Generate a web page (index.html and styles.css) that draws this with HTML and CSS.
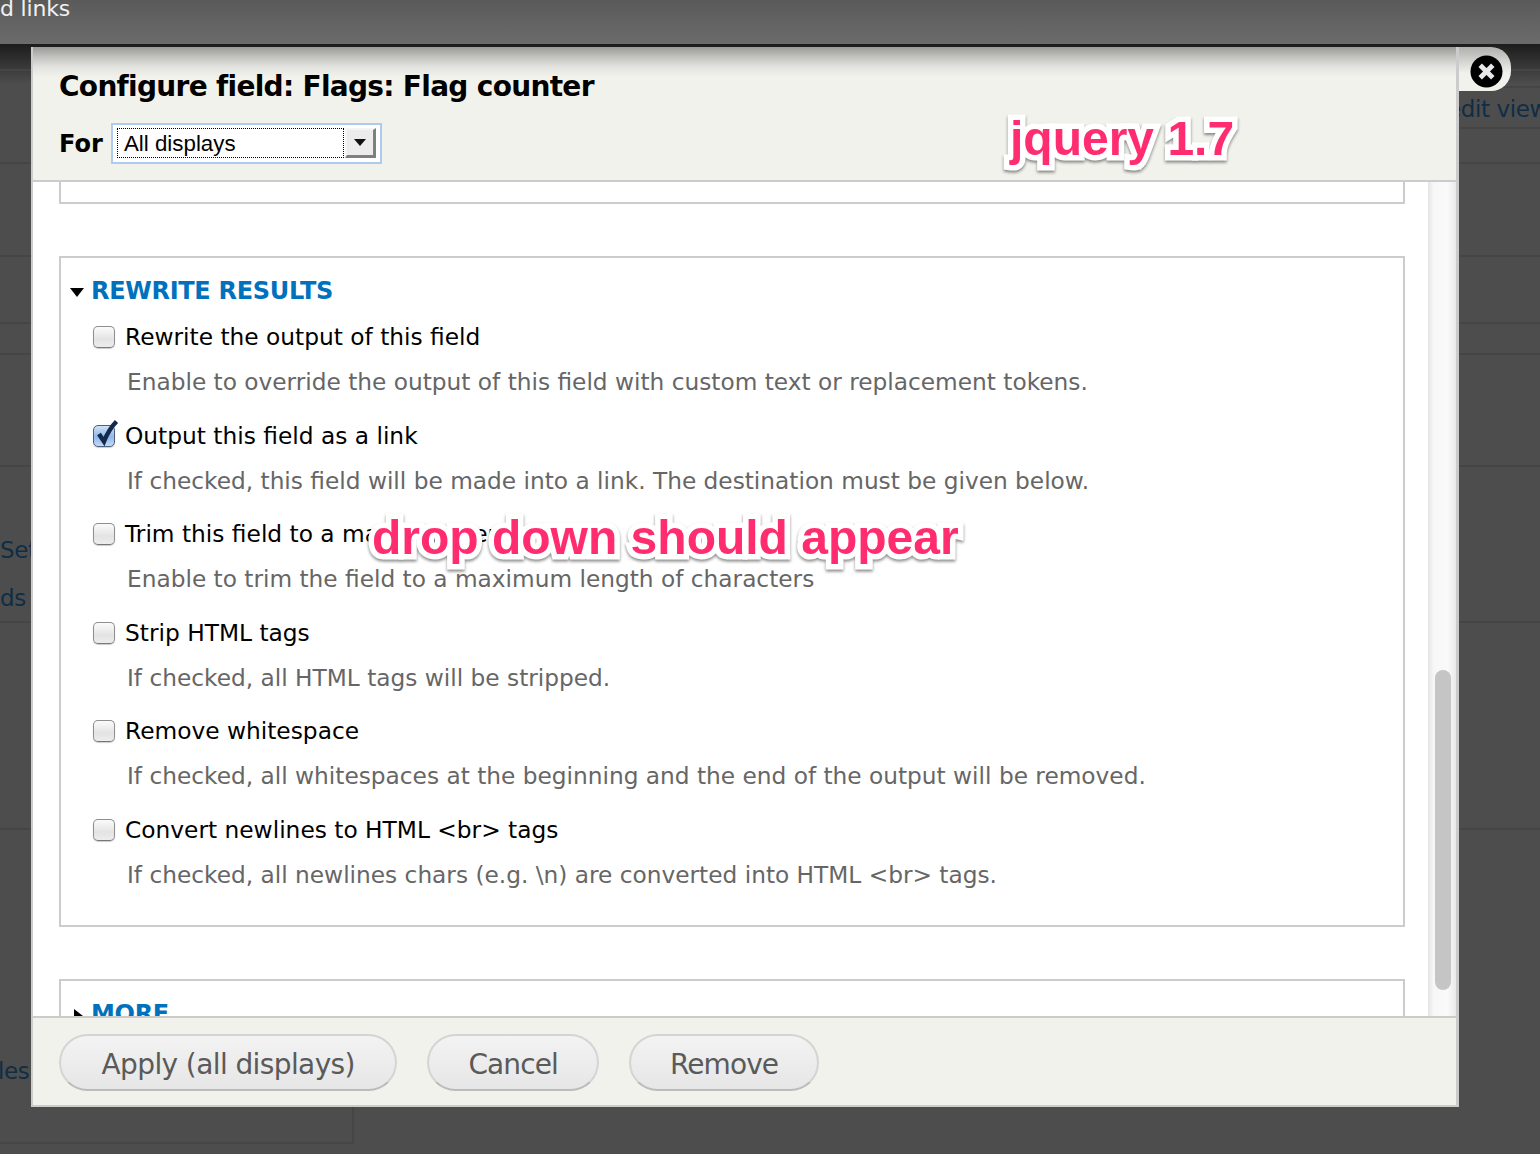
FILE: index.html
```html
<!DOCTYPE html>
<html lang="en">
<head>
<meta charset="utf-8">
<title>Configure field</title>
<link rel="stylesheet" href="styles.css">
</head>
<body>
<div class="topbar"><span class="topbar-text">d links</span></div>
<div class="page-bg">
  <span class="bg-line l1"></span><span class="bg-line l2"></span><span class="bg-line l3"></span><span class="bg-line l4"></span><span class="bg-line l5"></span><span class="bg-line l6"></span><span class="bg-line l7"></span><span class="bg-line l8"></span><span class="bg-line r1"></span><span class="bg-line r2"></span>
  <span class="bg-text t1">Set</span><span class="bg-text t2">ds</span><span class="bg-text t3">les</span><span class="bg-text t4">edit view</span>
  <span class="bg-box"></span>
</div>

<div class="close-tab">
  <svg class="close-icon" width="33" height="33" viewBox="0 0 34 34"><circle cx="17" cy="17" r="16.500" fill="#000"/><path d="M10.500 10.500 23.500 23.500M23.500 10.500 10.500 23.500" stroke="#e8e8e8" stroke-width="5"/></svg>
</div>

<div class="modal">
  <header class="modal-head">
    <h1 class="modal-title">Configure field: Flags: Flag counter</h1>
    <div class="for-row">
      <label class="for-label">For</label>
      <div class="select">
        <span class="select-value">All displays</span>
        <span class="select-btn"><span class="select-arrow"></span></span>
      </div>
    </div>
  </header>

  <div class="modal-body">
    <div class="scroll-content">
      <div class="stub"></div>
      <section class="fieldset">
        <h2 class="legend"><span class="tri-down"></span>REWRITE RESULTS</h2>
        <div class="item">
          <div class="item-row"><span class="cb"></span><span class="item-label">Rewrite the output of this field</span></div>
          <p class="item-desc">Enable to override the output of this field with custom text or replacement tokens.</p>
        </div>
        <div class="item">
          <div class="item-row"><span class="cb cb-on"><svg class="tick" width="26" height="28" viewBox="0 0 26 28"><path d="M5 15 10 22.500C13 15 17 8 22.500 2.500" fill="none" stroke="#14294d" stroke-width="4.500"/></svg></span><span class="item-label">Output this field as a link</span></div>
          <p class="item-desc">If checked, this field will be made into a link. The destination must be given below.</p>
        </div>
        <div class="item">
          <div class="item-row"><span class="cb"></span><span class="item-label">Trim this field to a maximum length</span></div>
          <p class="item-desc">Enable to trim the field to a maximum length of characters</p>
        </div>
        <div class="item">
          <div class="item-row"><span class="cb"></span><span class="item-label">Strip HTML tags</span></div>
          <p class="item-desc">If checked, all HTML tags will be stripped.</p>
        </div>
        <div class="item">
          <div class="item-row"><span class="cb"></span><span class="item-label">Remove whitespace</span></div>
          <p class="item-desc">If checked, all whitespaces at the beginning and the end of the output will be removed.</p>
        </div>
        <div class="item">
          <div class="item-row"><span class="cb"></span><span class="item-label">Convert newlines to HTML &lt;br&gt; tags</span></div>
          <p class="item-desc">If checked, all newlines chars (e.g. \n) are converted into HTML &lt;br&gt; tags.</p>
        </div>
      </section>
      <section class="fieldset fieldset-more">
        <h2 class="legend"><span class="tri-right"></span>MORE</h2>
      </section>
    </div>
    <div class="scrollbar"><div class="thumb"></div></div>
  </div>

  <footer class="modal-foot">
    <button class="btn btn-wide">Apply (all displays)</button>
    <button class="btn">Cancel</button>
    <button class="btn">Remove</button>
  </footer>
</div>

<span class="note note-jquery">jquery 1.7</span>
<span class="note note-drop">drop down should appear</span>
</body>
</html>
```

FILE: styles.css
```css
* { box-sizing: border-box; }
html, body { margin: 0; padding: 0; }
body {
  position: relative;
  width: 1540px;
  height: 1154px;
  overflow: hidden;
  background: #4d4d4d;
  font-family: "DejaVu Sans", "Liberation Sans", sans-serif;
}

/* page behind the overlay */
.topbar {
  height: 44px;
  background: linear-gradient(#5a5a5a, #6b6b6b);
  overflow: hidden;
}
.topbar-text {
  display: block;
  margin-top: -6px;
  font-size: 22px;
  line-height: 30px;
  color: #f0f0f0;
  letter-spacing: -0.2px;
}
.page-bg { position: absolute; inset: 44px 0 0 0; background: linear-gradient(#1c1c1c, #3a3a3a 24px, #4d4d4d 40px); }
.bg-line { position: absolute; left: 0; right: 0; height: 2px; background: #454545; }
.l1 { top: 25px; } .l2 { top: 118px; } .l3 { top: 211px; } .l4 { top: 278px; }
.l5 { top: 309px; } .l6 { top: 421px; } .l7 { top: 577px; } .l8 { top: 784px; }
.r1 { left: 1459px; top: 42px; }
.r2 { left: 1459px; top: 83px; }
.bg-text { position: absolute; font-size: 23px; letter-spacing: -0.4px; line-height: 30px; color: #0f2d45; white-space: nowrap; }
.t1 { left: 0; top: 491px; }
.t2 { left: 0; top: 539px; }
.t3 { left: -2px; top: 1012px; }
.t4 { left: 1447px; top: 50px; }
.bg-box { position: absolute; left: 0; top: 990px; width: 354px; height: 110px; border: solid #464646; border-width: 0 2px 2px 0; }

/* close tab */
.close-tab {
  position: absolute;
  left: 1456px;
  top: 47px;
  width: 55px;
  height: 44px;
  background: linear-gradient(#b0b0ae, #f2f2ed 60%);
  border-radius: 0 20px 20px 0;
  display: flex;
  align-items: center;
  justify-content: flex-end;
  padding: 4px 8px 0 0;
}
.close-icon { display: block; }

/* dialog */
.modal {
  position: absolute;
  left: 31px;
  top: 47px;
  width: 1428px;
  height: 1060px;
  border: solid #ccc;
  border-width: 0 3px 2px 2px;
  display: flex;
  flex-direction: column;
  background: #fff;
}
.modal-head {
  height: 135px;
  flex: none;
  padding: 21px 0 0 26px;
  background: linear-gradient(#9a9a98, #c6c6c3 11px, #e2e2de 20px, #f2f2ed 30px);
  border-bottom: 2px solid #ccc;
}
.modal-title {
  margin: 0;
  font-size: 28px;
  line-height: 38px;
  letter-spacing: -0.7px;
  font-weight: bold;
  color: #000;
}
.for-row {
  display: flex;
  align-items: center;
  margin-top: 17px;
}
.for-label { font-size: 24px; font-weight: bold; line-height: 40px; width: 52px; color: #000; }
.select {
  position: relative;
  width: 271px;
  height: 41px;
  border: 2px solid #aecbef;
  background: #fff;
  display: flex;
  align-items: flex-start;
  padding: 3px 4px 0 4px;
}
.select-value {
  width: 229px;
  height: 30px;
  border: 1px dotted #000;
  padding-left: 6px;
  font: 22.300px/29px "Liberation Sans", sans-serif;
  color: #000;
}
.select-btn {
  width: 31px;
  height: 30px;
  margin-left: 1px;
  background: #ececec;
  border: solid;
  border-width: 2px 3px 3px 2px;
  border-color: #f5f5f5 #7f7f7f #7f7f7f #f5f5f5;
  display: flex;
  align-items: center;
  justify-content: center;
}
.select-arrow { border: solid transparent; border-width: 7px 6px 0; border-top-color: #111; }

.modal-body { flex: 1; min-height: 0; display: flex; overflow: hidden; }
.scroll-content { flex: 1; min-width: 0; padding: 0 23px 0 26px; overflow: hidden; }
.stub {
  height: 22px;
  border: 2px solid #ccc;
  border-top: 0;
}
.fieldset {
  border: 2px solid #ccc;
  margin: 52px 0 0;
  height: 671px;
  padding: 16px 9px 0;
}
.fieldset-more { margin-top: 52px; height: 120px; padding-top: 16px; }
.legend {
  display: flex;
  align-items: center;
  margin: 0;
  height: 34px;
  font-size: 24px;
  letter-spacing: -0.3px;
  font-weight: bold;
  color: #0071bd;
}
.tri-down { border: solid transparent; border-width: 9px 7px 0; border-top-color: #000; margin-right: 7px; margin-top: 3px; }
.tri-right { border: solid transparent; border-width: 7px 0 7px 9px; border-left-color: #000; margin: 3px 8px 0 4px; }

.item { height: 98.6px; padding-left: 23px; }
.item:first-of-type { margin-top: 14px; }
.item-row { display: flex; align-items: center; height: 30px; }
.cb {
  position: relative;
  width: 22px;
  height: 22px;
  flex: none;
  margin-right: 10px;
  border-radius: 5px;
  border: 1px solid #8e8e8e;
  border-bottom-color: #777;
  background: linear-gradient(#fbfbfb, #e3e3e3 60%, #ededed);
  box-shadow: 0 1px 1px rgba(0,0,0,.2);
}
.cb-on { background: linear-gradient(#cfe2f7, #8fb8e8 55%, #c3dbf5); border-color: #4d5f7d; }
.tick { position: absolute; left: 0; top: -7px; }
.item-label { font-size: 23.300px; line-height: 30px; color: #000; white-space: nowrap; }
.item-desc { margin: 15px 0 0 2px; padding-left: 32px; font-size: 23.250px; line-height: 30px; color: #666; white-space: nowrap; }

.scrollbar {
  flex: none;
  width: 28px;
  position: relative;
  background: linear-gradient(90deg, #e4e4e4, #f7f7f7 20%, #fafafa 70%, #e9e9e9);
  padding: 488px 5px 0 7px;
}
.thumb { width: 16px; height: 320px; border-radius: 8px; background: #c5c5c5; }

.modal-foot {
  height: 89px;
  flex: none;
  display: flex;
  align-items: flex-start;
  gap: 30px;
  padding: 16px 0 0 26px;
  background: #f2f2ed;
  border-top: 2px solid #ccc;
}
.btn {
  height: 57px;
  padding: 5px 39px 0;
  border-radius: 29px;
  border: 2px solid #d4d4d4;
  border-bottom-color: #bbb;
  background: linear-gradient(#f3f3f3, #e6e6e6);
  font: 28px/1 "DejaVu Sans", sans-serif;
  letter-spacing: -0.9px;
  color: #5a5a5a;
}
.btn-wide { padding: 5px 40.500px 0; letter-spacing: -0.6px; }

/* annotations */
.note {
  position: absolute;
  font: bold 48px/60px "Liberation Sans", Arial, sans-serif;
  color: #ff2d6f;
  -webkit-text-stroke: 11px #fff;
  paint-order: stroke fill;
  filter: drop-shadow(0 2px 1.500px rgba(0,0,0,.45));
  white-space: nowrap;
}
.note-jquery { left: 1010px; top: 109px; }
.note-drop { left: 372px; top: 508px; }
```
